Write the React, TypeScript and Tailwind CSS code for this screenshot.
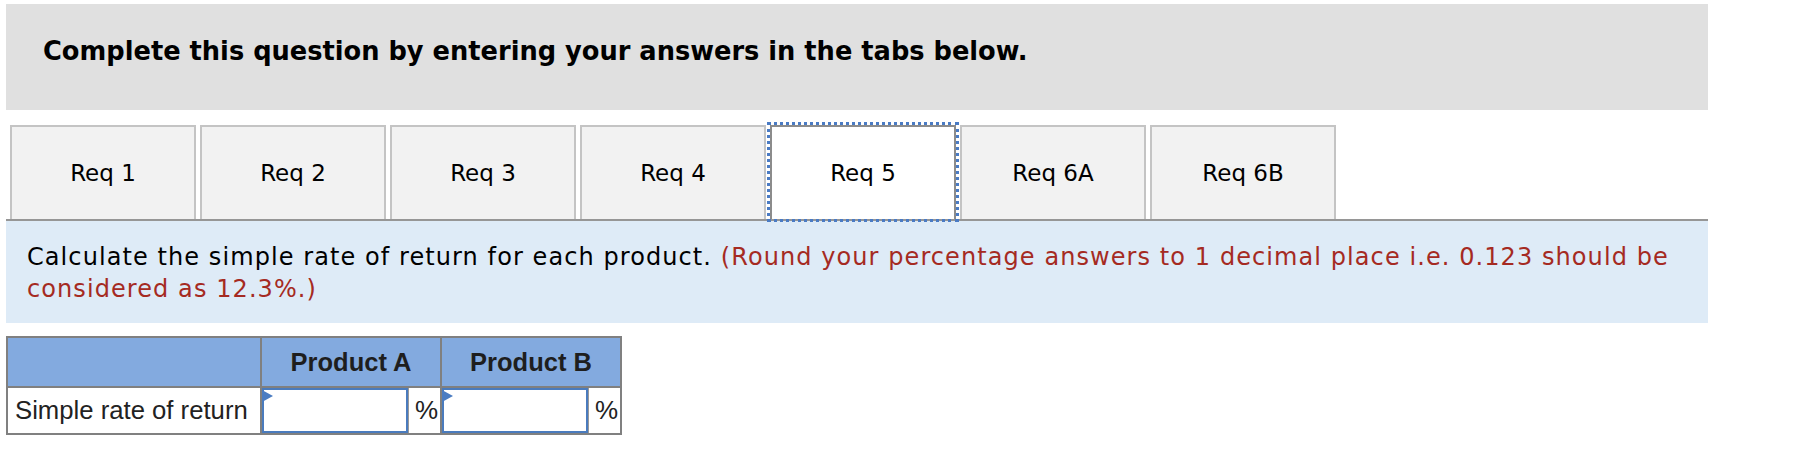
import React from "react";

const tabs = ["Req 1", "Req 2", "Req 3", "Req 4", "Req 5", "Req 6A", "Req 6B"];

function Marker() {
  return (
    <svg
      className="absolute left-0 top-[2px]"
      width="12"
      height="13"
      viewBox="0 0 12 13"
    >
      <polygon points="0,0 11,6 0,12" fill="#4a7cc2" />
    </svg>
  );
}

function InputCell() {
  return (
    <div className="flex h-full border-l-2 border-[#808080]">
      <div className="relative w-[146px] h-full">
        <input
          type="text"
          aria-label="answer"
          className="w-full h-full border-2 border-[#4a7bbd] bg-white outline-none"
        />
        <Marker />
      </div>
      <div className="w-[32px] h-full border-l border-[#999999] flex items-center justify-end pr-[2px] text-[26px] text-[#222]">
        %
      </div>
    </div>
  );
}

export default function App() {
  return (
    <div className="w-[1808px] h-[452px] bg-white overflow-hidden">
      <div className="pt-[4px] pl-[6px] w-[1708px]">
        <div
          className="h-[106px] bg-[#e0e0e0] pl-[37px] pt-[28px] text-[25.7px] font-bold text-black"
          style={{ fontFamily: '"DejaVu Sans", Verdana, sans-serif' }}
        >
          Complete this question by entering your answers in the tabs below.
        </div>

        <div
          className="mt-[15px] flex gap-[4px] pl-[4px] border-b-2 border-[#969696]"
          style={{ fontFamily: '"DejaVu Sans", Verdana, sans-serif' }}
        >
          {tabs.map((t) =>
            t === "Req 5" ? (
              <div
                key={t}
                className="w-[186px] h-[94px] border-2 border-b-0 border-[#8c8c8c] bg-white flex items-center justify-center text-[23px] text-black outline-[3px] outline-dotted outline-offset-0 outline-[#4a7bc4]"
              >
                {t}
              </div>
            ) : (
              <div
                key={t}
                className="w-[186px] h-[94px] border-2 border-b-0 border-[#c4c4c4] bg-[#f2f2f2] flex items-center justify-center text-[23px] text-black"
              >
                {t}
              </div>
            )
          )}
        </div>

        <div
          className="bg-[#deebf7] pt-[21px] pb-[18px] pl-[21px] pr-[20px] text-[24px] leading-[31.6px] tracking-[1.08px] text-black"
          style={{ fontFamily: '"DejaVu Sans", Verdana, sans-serif' }}
        >
          Calculate the simple rate of return for each product.{" "}
          <span className="text-[#a52a22]">
            (Round your percentage answers to 1 decimal place i.e. 0.123 should be
            considered as 12.3%.)
          </span>
        </div>

        <div
          className="mt-[13px] w-[616px] border-2 border-[#808080]"
          style={{ fontFamily: '"Liberation Sans", Arial, sans-serif' }}
        >
          <div className="flex h-[48px] bg-[#83aadf] text-[25.5px] font-bold text-[#1e1e1e]">
            <div className="w-[252px]" />
            <div className="w-[180px] border-l-2 border-[#808080] flex items-center justify-center">
              Product A
            </div>
            <div className="w-[180px] border-l-2 border-[#808080] flex items-center justify-center">
              Product B
            </div>
          </div>
          <div className="flex h-[47px] border-t-2 border-[#808080] bg-white">
            <div className="w-[252px] flex items-center pl-[7px] text-[25.7px] text-[#222]">
              Simple rate of return
            </div>
            <div className="w-[180px] h-full">
              <InputCell />
            </div>
            <div className="w-[180px] h-full">
              <InputCell />
            </div>
          </div>
        </div>
      </div>
    </div>
  );
}
